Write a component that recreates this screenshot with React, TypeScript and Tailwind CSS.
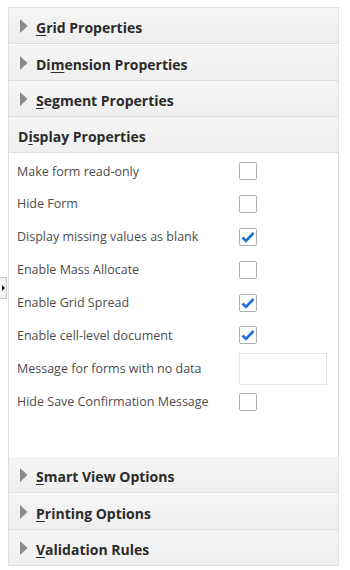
import React from "react";

const font = { fontFamily: '"Open Sans", "Noto Sans", sans-serif' };

function Tri() {
  return (
    <svg width="8" height="14" viewBox="0 0 8 14" className="shrink-0">
      <path d="M0 0 L7.5 7 L0 14 Z" fill="#8a8a8a" />
    </svg>
  );
}

function Header({ pre, u, post, open = false }: { pre: string; u: string; post: string; open?: boolean }) {
  return (
    <div className="h-[36px] pt-[3px] flex items-center bg-gradient-to-b from-[#f5f5f5] to-[#efefef] border-b border-[#dde1e5]">
      {open ? null : (
        <div className="pl-[11px] pr-[8px] flex items-center -mt-[2px]">
          <Tri />
        </div>
      )}
      <span className={`text-[14px] font-bold text-[#2b2b2b] ${open ? "pl-[9px]" : ""}`}>
        {pre}
        <span className="underline underline-offset-2">{u}</span>
        {post}
      </span>
    </div>
  );
}

function Check({ checked }: { checked: boolean }) {
  return (
    <div className="w-[18px] h-[18px] border border-[#a9b1b8] rounded-[2px] bg-white flex items-center justify-center">
      {checked ? (
        <svg width="14" height="12" viewBox="0 0 14 12">
          <path d="M1.5 6.5 L5 10 L12.5 2" fill="none" stroke="#1a73c8" strokeWidth="2.6" />
        </svg>
      ) : null}
    </div>
  );
}

const rows: { label: string; kind: "on" | "off" | "text" }[] = [
  { label: "Make form read-only", kind: "off" },
  { label: "Hide Form", kind: "off" },
  { label: "Display missing values as blank", kind: "on" },
  { label: "Enable Mass Allocate", kind: "off" },
  { label: "Enable Grid Spread", kind: "on" },
  { label: "Enable cell-level document", kind: "on" },
  { label: "Message for forms with no data", kind: "text" },
  { label: "Hide Save Confirmation Message", kind: "off" },
];

export default function App() {
  return (
    <div className="relative w-[350px] h-[570px] bg-white overflow-hidden" style={font}>
      <div className="absolute left-0 top-[277px] w-[7px] h-[22px] bg-[#f4f4f4] border border-l-0 border-[#c8c8c8] flex items-center justify-center">
        <svg width="3" height="6" viewBox="0 0 3 6">
          <path d="M0 0 L3 3 L0 6 Z" fill="#111" />
        </svg>
      </div>
      <div className="ml-[8px] mt-[7px] w-[331px] border-l border-r border-t border-[#dde1e5] flex flex-col">
        <Header pre="" u="G" post="rid Properties" />
        <div className="h-px bg-white" />
        <Header pre="Di" u="m" post="ension Properties" />
        <Header pre="" u="S" post="egment Properties" />
        <Header pre="D" u="i" post="splay Properties" open />
        <div className="h-[304px] bg-white pt-[2px] flex flex-col">
          {rows.map((r) => (
            <div key={r.label} className={`flex items-center pl-[8px] ${r.kind === "text" ? "h-[34px]" : "h-[32.8px]"}`}>
              <span className="w-[222px] text-[12.5px] text-[#4d4d4d] pt-[1px]">{r.label}</span>
              {r.kind === "text" ? (
                <div className="w-[88px] h-[32px] border border-[#e3e5e8] bg-white" />
              ) : (
                <Check checked={r.kind === "on"} />
              )}
            </div>
          ))}
        </div>
        <Header pre="" u="S" post="mart View Options" />
        <div className="h-px bg-white" />
        <Header pre="" u="P" post="rinting Options" />
        <Header pre="" u="V" post="alidation Rules" />
      </div>
    </div>
  );
}
